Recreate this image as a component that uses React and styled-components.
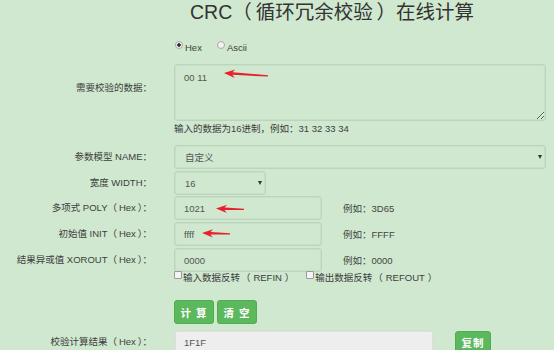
import styled, { createGlobalStyle } from "styled-components";

const GlobalStyle = createGlobalStyle`
  html, body {
    margin: 0;
    padding: 0;
    background-color: #cfe8cf;
  }
  body {
    font-family: "Liberation Sans", "Noto Sans CJK SC", sans-serif;
    font-size: 9.5px;
    color: #333;
  }
`;

// full-width brackets, with some air on the inner side like the original font
const Open = () => <Paren $open>（</Paren>;
const Close = () => <Paren>）</Paren>;

const App = () => {
  return (
    <Page>
      <GlobalStyle />
      <Title>
        CRC<Open />循环冗余校验<Close />在线计算
      </Title>

      <Row $mt={16}>
        <span />
        <Options>
          <Option>
            <Radio type="radio" name="fmt" defaultChecked />
            Hex
          </Option>
          <Option>
            <Radio type="radio" name="fmt" />
            Ascii
          </Option>
        </Options>
      </Row>

      <Row $mt={10} $top>
        <Label $pt={17}>需要校验的数据：</Label>
        <TextArea defaultValue="00 11" />
      </Row>
      <Row>
        <span />
        <Help>输入的数据为16进制，例如：31 32 33 34</Help>
      </Row>

      <Row $mt={9}>
        <Label>参数模型 NAME：</Label>
        <SelectBox $w={372}>
          <Select defaultValue="custom">
            <option value="custom">自定义</option>
          </Select>
          <Caret />
        </SelectBox>
      </Row>
      <Row $mt={2}>
        <Label>宽度 WIDTH：</Label>
        <SelectBox $w={92}>
          <Select defaultValue="16">
            <option value="16">16</option>
          </Select>
          <Caret />
        </SelectBox>
      </Row>
      <Row $mt={1}>
        <Label>
          多项式 POLY<Open />Hex<Close />：
        </Label>
        <Field>
          <Input defaultValue="1021" />
          <Hint>例如：3D65</Hint>
        </Field>
      </Row>
      <Row $mt={2}>
        <Label>
          初始值 INIT<Open />Hex<Close />：
        </Label>
        <Field>
          <Input defaultValue="ffff" />
          <Hint>例如：FFFF</Hint>
        </Field>
      </Row>
      <Row $mt={2}>
        <Label>
          结果异或值 XOROUT<Open />Hex<Close />：
        </Label>
        <Field>
          <Input defaultValue="0000" />
          <Hint>例如：0000</Hint>
        </Field>
      </Row>

      <Row $mt={-2}>
        <span />
        <Options $gap={12}>
          <Option>
            <Check type="checkbox" />
            输入数据反转<Open />REFIN<Close />
          </Option>
          <Option>
            <Check type="checkbox" />
            输出数据反转<Open />REFOUT<Close />
          </Option>
        </Options>
      </Row>

      <Row $mt={16}>
        <span />
        <Buttons>
          <Button>计 算</Button>
          <Button>清 空</Button>
        </Buttons>
      </Row>

      <Row $mt={6}>
        <Label>
          校验计算结果<Open />Hex<Close />：
        </Label>
        <Field>
          <Input $w={260} $readOnly readOnly defaultValue="1F1F" />
          <Button $small>复制</Button>
        </Field>
      </Row>

      <Annotations width="554" height="350" viewBox="0 0 554 350">
        <Arrow x1={268} y1={76} x2={224} y2={73} />
        <Arrow x1={244} y1={209.5} x2={216} y2={208.5} />
        <Arrow x1={230} y1={234} x2={202} y2={233} />
      </Annotations>
    </Page>
  );
};

const Arrow = ({ x1, y1, x2, y2 }) => {
  const angle = (Math.atan2(y2 - y1, x2 - x1) * 180) / Math.PI;
  const len = Math.hypot(x2 - x1, y2 - y1);
  return (
    <g transform={`translate(${x2} ${y2}) rotate(${angle})`}>
      <path
        d={`M0 0 L-11 -4.2 L-8.5 -1.2 L-${len} -0.6 L-${len} 0.8 L-8.5 1.3 L-11 4.2 Z`}
        fill="#e8202b"
      />
    </g>
  );
};

export default App;

const Page = styled.div`
  position: relative;
  width: 554px;
  height: 350px;
  overflow: hidden;
  padding-right: 8px;
  box-sizing: border-box;
`;

const Paren = styled.span`
  margin-right: ${(p) => (p.$open ? "0.2em" : "0")};
  margin-left: ${(p) => (p.$open ? "0" : "0.2em")};
`;

const Title = styled.h1`
  margin: 0;
  padding-left: 190px;
  font-size: 19.5px;
  line-height: 24px;
  font-weight: normal;
  color: #333;
  white-space: nowrap;
`;

const Row = styled.div`
  display: grid;
  grid-template-columns: 152px 1fr;
  column-gap: 22px;
  align-items: ${(p) => (p.$top ? "start" : "center")};
  margin-top: ${(p) => p.$mt || 0}px;
`;

const Label = styled.label`
  text-align: right;
  white-space: nowrap;
  color: #3d3d3d;
  line-height: 14px;
  padding-top: ${(p) => p.$pt || 0}px;
`;

const Options = styled.div`
  display: flex;
  align-items: center;
  gap: ${(p) => p.$gap || 14}px;
  height: 14px;
  color: #3d3d3d;
`;

const Option = styled.label`
  display: flex;
  align-items: center;
  gap: 1px;
  white-space: nowrap;
`;

const Radio = styled.input`
  appearance: none;
  margin: 0 1px;
  width: 8px;
  height: 8px;
  border-radius: 50%;
  border: 1px solid #a8a8a8;
  background: #f2f2f2;
  box-sizing: border-box;
  position: relative;
  top: -2px;
  &:checked {
    background: radial-gradient(circle, #333 0 1.5px, #f2f2f2 2px);
  }
`;

const Check = styled.input`
  appearance: none;
  margin: 0;
  width: 8px;
  height: 8px;
  border: 1px solid #9a9a9a;
  border-radius: 1px;
  background: #f4f4f4;
  box-sizing: border-box;
  position: relative;
  top: -2px;
`;

const controlBase = `
  box-sizing: border-box;
  border: 1px solid #bcd4bc;
  border-radius: 3px;
  background: transparent;
  color: #555;
  font-family: "Liberation Sans", "Noto Sans CJK SC", sans-serif;
  font-size: 9.5px;
  outline: none;
  box-shadow: inset 0 0 0 1px rgba(190, 212, 190, 0.45);
`;

const TextArea = styled.textarea`
  ${controlBase}
  display: block;
  width: 372px;
  height: 57px;
  padding: 6px 9px;
  line-height: 14px;
  resize: vertical;
`;

const Help = styled.div`
  color: #3d3d3d;
  line-height: 14px;
  padding-top: 1px;
`;

const SelectBox = styled.div`
  position: relative;
  width: ${(p) => p.$w}px;
  height: 24px;
`;

const Select = styled.select`
  ${controlBase}
  appearance: none;
  width: 100%;
  height: 100%;
  padding: 0 10px;
`;

const Caret = styled.span`
  position: absolute;
  right: 4px;
  top: 10px;
  width: 0;
  height: 0;
  border-left: 2.5px solid transparent;
  border-right: 2.5px solid transparent;
  border-top: 4px solid #333;
  pointer-events: none;
`;

const Field = styled.div`
  display: flex;
  align-items: center;
  gap: 21px;
`;

const Input = styled.input`
  ${controlBase}
  width: ${(p) => p.$w || 148}px;
  height: 24px;
  padding: 0 9px;
  ${(p) =>
    p.$readOnly &&
    `
    background: #eeeeee;
    border-color: #d6dcd6;
    color: #555;
  `}
`;

const Hint = styled.span`
  color: #444;
  white-space: nowrap;
`;

const Buttons = styled.div`
  display: flex;
  gap: 3px;
`;

const Button = styled.button`
  box-sizing: border-box;
  height: ${(p) => (p.$small ? 23 : 24)}px;
  width: ${(p) => (p.$small ? 36 : 40)}px;
  padding: 0;
  border: 1px solid #4cae4c;
  border-radius: 3px;
  background: #5cb85c;
  color: #fff;
  font-family: "Liberation Sans", "Noto Sans CJK SC", sans-serif;
  font-size: 10.5px;
  font-weight: bold;
  letter-spacing: 1px;
  cursor: pointer;
`;

const Annotations = styled.svg`
  position: absolute;
  left: 0;
  top: 0;
  pointer-events: none;
`;
